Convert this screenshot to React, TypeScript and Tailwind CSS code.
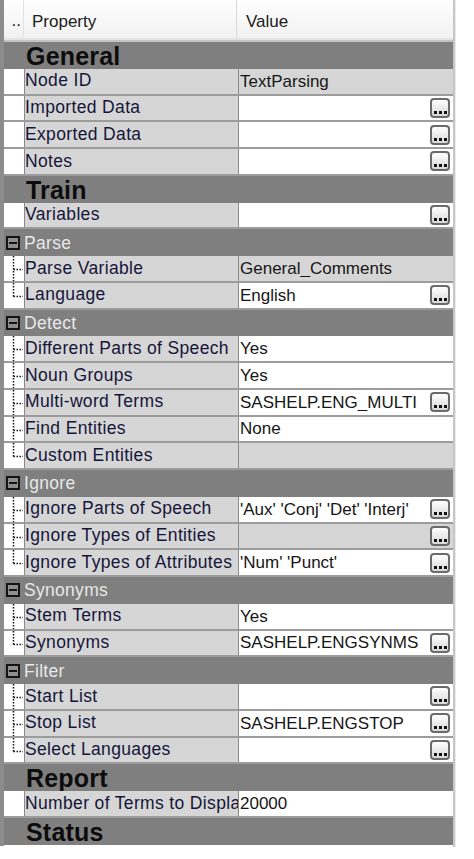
import React from "react";

type Row =
  | { kind: "top"; label: string }
  | { kind: "group"; label: string }
  | {
      kind: "item";
      label: string;
      value?: string;
      readOnly?: boolean;
      button?: boolean;
      child?: "mid" | "last";
    };

const rows: Row[] = [
  { kind: "top", label: "General" },
  { kind: "item", label: "Node ID", value: "TextParsing", readOnly: true },
  { kind: "item", label: "Imported Data", button: true },
  { kind: "item", label: "Exported Data", button: true },
  { kind: "item", label: "Notes", button: true },
  { kind: "top", label: "Train" },
  { kind: "item", label: "Variables", button: true },
  { kind: "group", label: "Parse" },
  { kind: "item", label: "Parse Variable", value: "General_Comments", readOnly: true, child: "mid" },
  { kind: "item", label: "Language", value: "English", button: true, child: "last" },
  { kind: "group", label: "Detect" },
  { kind: "item", label: "Different Parts of Speech", value: "Yes", child: "mid" },
  { kind: "item", label: "Noun Groups", value: "Yes", child: "mid" },
  { kind: "item", label: "Multi-word Terms", value: "SASHELP.ENG_MULTI", button: true, child: "mid" },
  { kind: "item", label: "Find Entities", value: "None", child: "mid" },
  { kind: "item", label: "Custom Entities", readOnly: true, child: "last" },
  { kind: "group", label: "Ignore" },
  { kind: "item", label: "Ignore Parts of Speech", value: "'Aux' 'Conj' 'Det' 'Interj'", button: true, child: "mid" },
  { kind: "item", label: "Ignore Types of Entities", readOnly: true, button: true, child: "mid" },
  { kind: "item", label: "Ignore Types of Attributes", value: "'Num' 'Punct'", button: true, child: "last" },
  { kind: "group", label: "Synonyms" },
  { kind: "item", label: "Stem Terms", value: "Yes", child: "mid" },
  { kind: "item", label: "Synonyms", value: "SASHELP.ENGSYNMS", button: true, child: "last" },
  { kind: "group", label: "Filter" },
  { kind: "item", label: "Start List", button: true, child: "mid" },
  { kind: "item", label: "Stop List", value: "SASHELP.ENGSTOP", button: true, child: "mid" },
  { kind: "item", label: "Select Languages", button: true, child: "last" },
  { kind: "top", label: "Report" },
  { kind: "item", label: "Number of Terms to Display", value: "20000" },
  { kind: "top", label: "Status" },
];

const EllipsisButton = () => (
  <div className="mr-[3px] flex h-[20px] w-[20px] shrink-0 items-end justify-center gap-[2px] rounded-[4px] border-2 border-[#6a6a6a] bg-gradient-to-b from-white to-[#d8d8d8] pb-[2px]">
    <span className="h-[3px] w-[3px] bg-[#111]" />
    <span className="h-[3px] w-[3px] bg-[#111]" />
    <span className="h-[3px] w-[3px] bg-[#111]" />
  </div>
);

const TreeLine = ({ last }: { last: boolean }) => (
  <svg width="20" height="27" viewBox="0 0 20 27" className="block">
    <line
      x1="9.5"
      y1="0"
      x2="9.5"
      y2={last ? 13.5 : 27}
      stroke="#111"
      strokeWidth="1.5"
      strokeDasharray="1.5 1.5"
    />
    <line
      x1="9.5"
      y1="13.5"
      x2="19"
      y2="13.5"
      stroke="#111"
      strokeWidth="1.5"
      strokeDasharray="1.5 1.5"
    />
  </svg>
);

const MinusBox = () => (
  <div className="ml-[2px] mr-[4px] flex h-[14px] w-[14px] shrink-0 items-center justify-center border-2 border-[#141414] bg-[#8e8e8e]">
    <span className="h-[2px] w-[8px] bg-[#141414]" />
  </div>
);

export default function App() {
  return (
    <div
      className="flex h-[859px] w-[474px] items-start bg-white"
      style={{ fontFamily: '"Liberation Sans", Arial, sans-serif' }}
    >
      <div className="h-[846px] w-[4px] bg-[#8c8c8c]" />
      <div className="flex w-[449px] flex-col">
        {/* header */}
        <div className="flex h-[38px] bg-gradient-to-b from-white to-[#f1f1f1] text-[17px] text-[#202020]">
          <div className="flex w-[20px] items-center justify-end border-r border-[#e2e2e2] pr-[2px] pt-[4px]">
            ..
          </div>
          <div className="flex w-[213px] items-center border-r border-[#d8d8d8] pl-[8px] pt-[6px]">
            Property
          </div>
          <div className="flex flex-1 items-center pl-[9px] pt-[6px]">Value</div>
        </div>
        <div className="h-[4px] border-t-2 border-[#e4e4e4] bg-[#c4c4c4]" />
        {rows.map((row, i) => {
          if (row.kind === "top") {
            return (
              <div
                key={i}
                className="flex h-[26.75px] items-center overflow-hidden bg-[#7f7f7f] pl-[22px] pt-[2px] text-[25px] font-bold leading-none tracking-[0.2px] text-[#0c0c0c]"
              >
                {row.label}
              </div>
            );
          }
          if (row.kind === "group") {
            return (
              <div
                key={i}
                className="flex h-[26.75px] items-center bg-[#7f7f7f] text-[17.5px] tracking-[0.3px] text-[#e8e8e8]"
              >
                <MinusBox />
                {row.label}
              </div>
            );
          }
          return (
            <div
              key={i}
              className="flex h-[26.75px] border-b-2 border-[#9c9c9c] text-[17px] leading-none"
            >
              <div className="w-[20px] shrink-0 overflow-hidden bg-white">
                {row.child && <TreeLine last={row.child === "last"} />}
              </div>
              <div className="flex w-[214px] shrink-0 items-center overflow-hidden whitespace-nowrap border-l border-[#8a8a8a] bg-[#d6d6d6] text-[17.5px] tracking-[0.35px] text-[#15153a]">
                {row.label}
              </div>
              <div
                className={`flex min-w-0 flex-1 items-center border-l border-[#8a8a8a] pl-[1px] text-[#161616] ${
                  row.readOnly ? "bg-[#d6d6d6]" : "bg-white"
                }`}
              >
                <span className="flex-1 overflow-hidden whitespace-nowrap">
                  {row.value}
                </span>
                {row.button && <EllipsisButton />}
              </div>
            </div>
          );
        })}
      </div>
      <div className="h-[847px] w-[3px] border-l-2 border-[#c6c6c6] bg-[#ececec]" />
    </div>
  );
}
